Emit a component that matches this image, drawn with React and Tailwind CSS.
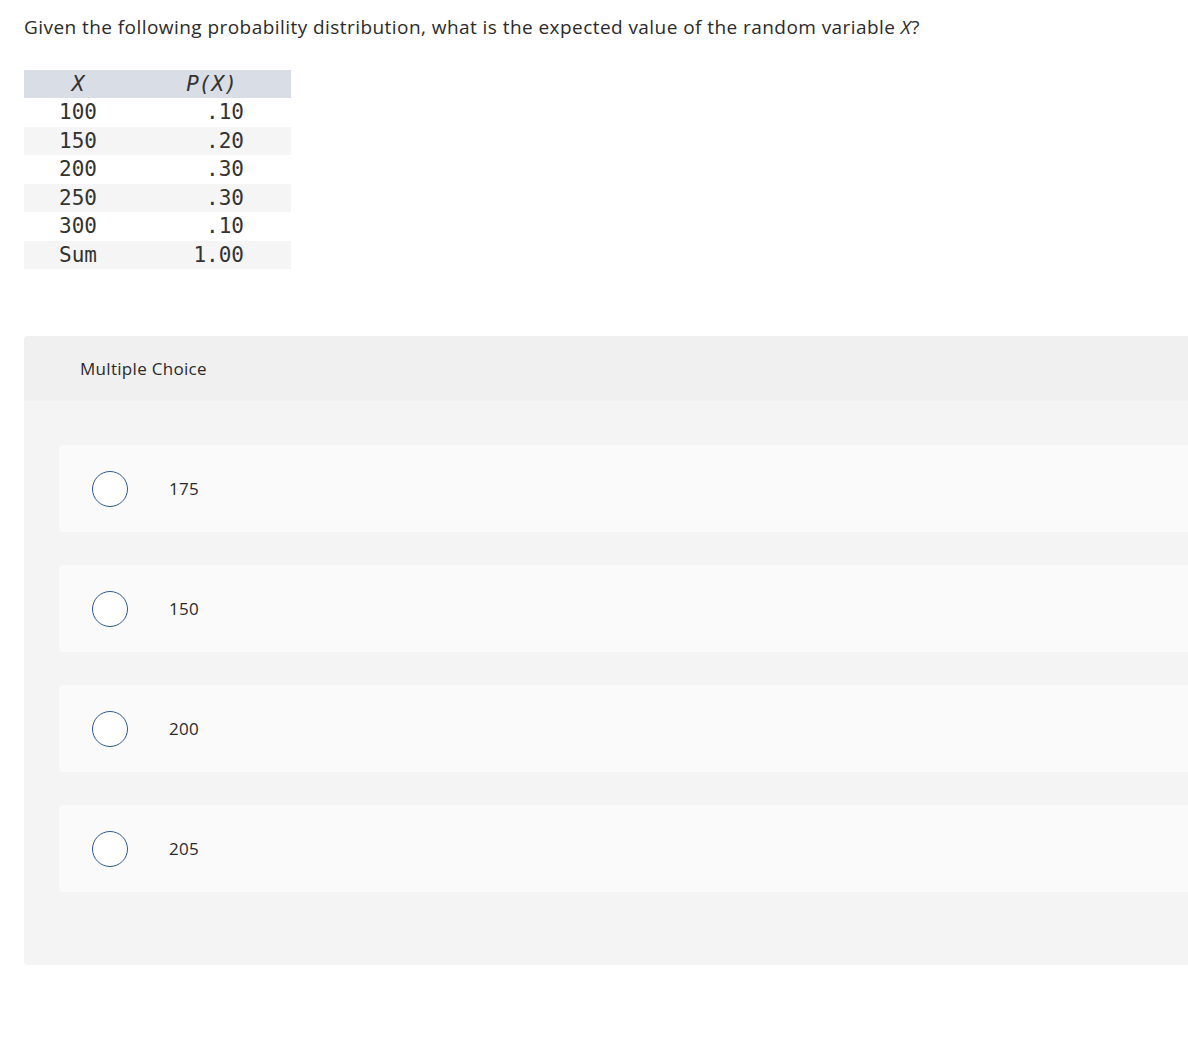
const rows = [
  ["100", ".10"],
  ["150", ".20"],
  ["200", ".30"],
  ["250", ".30"],
  ["300", ".10"],
  ["Sum", "1.00"],
];

const choices = ["175", "150", "200", "205"];

export default function App() {
  return (
    <div className="min-h-[1058px] bg-white pt-[15px] pl-[24px] text-[#2b2b2b]" style={{ fontFamily: '"Open Sans", "Liberation Sans", sans-serif' }}>
      <p className="text-[19px] leading-[24px] tracking-[0.44px]">
        Given the following probability distribution, what is the expected value of the random variable <i>X</i>?
      </p>

      <table className="mt-[31px] w-[267px] border-collapse text-[21px] text-[#333]" style={{ fontFamily: '"DejaVu Sans Mono", "Liberation Mono", monospace' }}>
        <thead>
          <tr className="h-[28px] bg-[#d9dde6]">
            <th className="w-[108px] p-0 pt-[1px] text-center font-normal italic leading-[27px]">X</th>
            <th className="p-0 pt-[1px] text-center font-normal italic leading-[27px]">P(X)</th>
          </tr>
        </thead>
        <tbody>
          {rows.map(([x, p], i) => (
            <tr key={x} className={i % 2 === 1 ? "h-[28.5px] bg-[#f5f5f5]" : "h-[28.5px]"}>
              <td className="p-0 pt-[1px] text-center leading-[27px]">{x}</td>
              <td className="p-0 pt-[1px] pr-[47px] text-right leading-[27px]">{p}</td>
            </tr>
          ))}
        </tbody>
      </table>

      <div className="mt-[67px] overflow-hidden rounded-l-[4px] bg-[#f4f4f4]">
        <div className="flex h-[65px] items-center bg-[#f0f0f0] pl-[56px] text-[17px] tracking-[0.3px]">Multiple Choice</div>
        <div className="flex flex-col gap-[33px] pt-[44px] pb-[73px] pl-[35px]">
          {choices.map((c) => (
            <div key={c} className="flex h-[87px] items-center rounded-l-[4px] bg-[#fafafa]">
              <span className="ml-[33px] h-[36px] w-[36px] rounded-full border border-[#2c5a92] bg-white" />
              <span className="ml-[41px] text-[17px] tracking-[0.3px]">{c}</span>
            </div>
          ))}
        </div>
      </div>
    </div>
  );
}
